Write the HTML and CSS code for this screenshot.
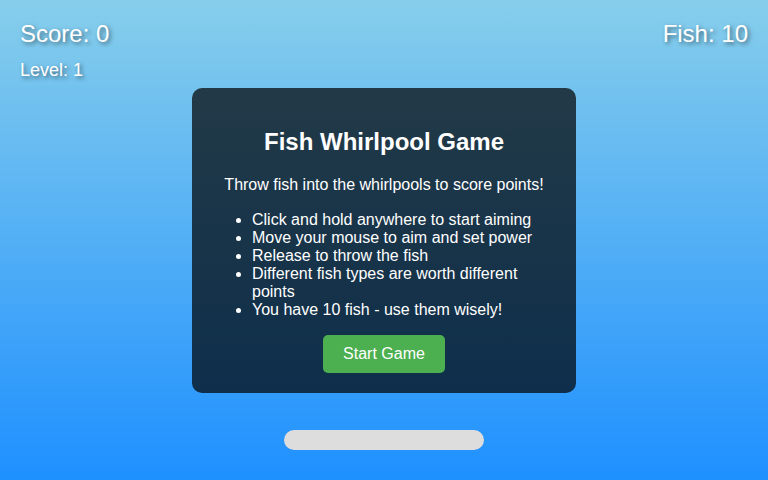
FILE: index.html
```html
<!DOCTYPE html>
<html lang="en">
<head>
<meta charset="utf-8">
<title>Fish Whirlpool Game</title>
<link rel="stylesheet" href="styles.css">
</head>
<body>
<div class="game">
  <div class="hud hud-left">
    <div class="score">Score: 0</div>
    <div class="level">Level: 1</div>
  </div>
  <div class="hud hud-right">
    <div class="fish">Fish: 10</div>
  </div>
  <div class="menu">
    <h2 class="menu-title">Fish Whirlpool Game</h2>
    <p class="menu-intro">Throw fish into the whirlpools to score points!</p>
    <ul class="menu-list">
      <li>Click and hold anywhere to start aiming</li>
      <li>Move your mouse to aim and set power</li>
      <li>Release to throw the fish</li>
      <li>Different fish types are worth different points</li>
      <li>You have 10 fish - use them wisely!</li>
    </ul>
    <button class="start-btn" type="button">Start Game</button>
  </div>
  <div class="power-meter"></div>
</div>
</body>
</html>
```
FILE: styles.css
```css
html, body {
  margin: 0;
  padding: 0;
  height: 100%;
}
body {
  font-family: "Liberation Sans", Arial, sans-serif;
  overflow: hidden;
}
.game {
  position: relative;
  width: 100%;
  height: 100vh;
  background: linear-gradient(to bottom, #87ceeb, #1e90ff);
  display: flex;
  align-items: center;
  justify-content: center;
}
.hud {
  position: absolute;
  top: 20px;
  color: #fff;
  text-shadow: 2px 2px 4px rgba(0, 0, 0, 0.5);
}
.hud-left { left: 20px; }
.hud-right { right: 20px; }
.score, .fish {
  font-size: 24px;
}
.level {
  font-size: 18px;
  margin-top: 12px;
}
.menu {
  width: 344px;
  padding: 20px;
  background: rgba(0, 0, 0, 0.7);
  border-radius: 10px;
  color: #fff;
  text-align: center;
}
.menu-title {
  font-size: 24px;
  margin: 20px 0;
}
.menu-intro {
  font-size: 16px;
  margin: 16px 0 17px;
}
.menu-list {
  text-align: left;
  font-size: 16px;
  margin: 17px 0 16px;
  padding-left: 40px;
}
.start-btn {
  font-family: "Liberation Sans", Arial, sans-serif;
  font-size: 16px;
  padding: 10px 20px;
  background: #4caf50;
  color: #fff;
  border: none;
  border-radius: 5px;
  cursor: pointer;
}
.power-meter {
  position: absolute;
  bottom: 30px;
  left: 50%;
  width: 200px;
  height: 20px;
  margin-left: -100px;
  background: #ddd;
  border-radius: 10px;
}
```
